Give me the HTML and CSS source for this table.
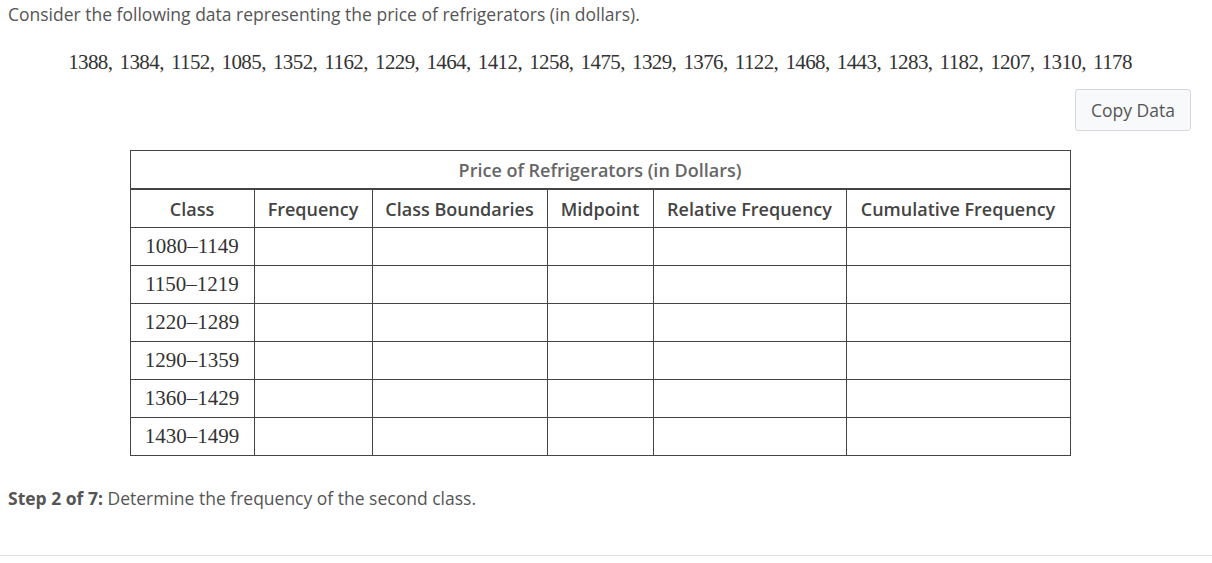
FILE: index.html
```html
<!DOCTYPE html>
<html>
<head>
<meta charset="utf-8">
<link rel="stylesheet" href="styles.css">
</head>
<body>
<div class="page">
  <p class="intro">Consider the following data representing the price of refrigerators (in dollars).</p>
  <p class="data">1388, 1384, 1152, 1085, 1352, 1162, 1229, 1464, 1412, 1258, 1475, 1329, 1376, 1122, 1468, 1443, 1283, 1182, 1207, 1310, 1178</p>
  <div class="btn-row"><button class="copy-btn">Copy Data</button></div>
  <div class="table-wrap">
    <table class="freq">
      <colgroup>
        <col class="c1"><col class="c2"><col class="c3"><col class="c4"><col class="c5"><col class="c6">
      </colgroup>
      <thead>
        <tr class="title-row"><th colspan="6">Price of Refrigerators (in Dollars)</th></tr>
        <tr class="head-row">
          <th>Class</th>
          <th>Frequency</th>
          <th>Class Boundaries</th>
          <th>Midpoint</th>
          <th>Relative Frequency</th>
          <th>Cumulative Frequency</th>
        </tr>
      </thead>
      <tbody>
        <tr><td class="cls">1080–1149</td><td></td><td></td><td></td><td></td><td></td></tr>
        <tr><td class="cls">1150–1219</td><td></td><td></td><td></td><td></td><td></td></tr>
        <tr><td class="cls">1220–1289</td><td></td><td></td><td></td><td></td><td></td></tr>
        <tr><td class="cls">1290–1359</td><td></td><td></td><td></td><td></td><td></td></tr>
        <tr><td class="cls">1360–1429</td><td></td><td></td><td></td><td></td><td></td></tr>
        <tr><td class="cls">1430–1499</td><td></td><td></td><td></td><td></td><td></td></tr>
      </tbody>
    </table>
  </div>
  <p class="step"><span class="step-label">Step 2 of 7:</span> Determine the frequency of the second class.</p>
</div>
<div class="rule"></div>
</body>
</html>
```

FILE: styles.css
```css
html, body {
  margin: 0;
  padding: 0;
  background: #fff;
}
body {
  font-family: "Open Sans", "Liberation Sans", sans-serif;
  color: #555;
  font-size: 17.5px;
}
.page {
  padding: 0 20px 0 8px;
}
.intro {
  margin: 0;
  padding-top: 2px;
  line-height: 24px;
}
.data {
  margin: 23px 0 0 0;
  font-family: "Liberation Serif", "Times New Roman", serif;
  font-size: 21px;
  letter-spacing: -0.6px;
  word-spacing: 2.5px;
  line-height: 26px;
  color: #333;
  text-align: center;
}
.btn-row {
  display: flex;
  justify-content: flex-end;
  margin-top: 14px;
}
.copy-btn {
  font-family: "Open Sans", "Liberation Sans", sans-serif;
  font-size: 17.5px;
  color: #555;
  background: #f8f9fa;
  border: 1px solid #d6d8db;
  border-radius: 3px;
  height: 42px;
  width: 116px;
  padding: 0;
  margin-right: 1px;
}
.table-wrap {
  display: flex;
  justify-content: center;
  margin-top: 19px;
}
.freq {
  border-collapse: collapse;
  width: 940px;
  table-layout: fixed;
  color: #444;
}
.freq th, .freq td {
  border: 1px solid #444;
  padding: 0;
  height: 37px;
  text-align: center;
  white-space: nowrap;
}
.freq th {
  font-weight: 600;
  font-size: 18px;
}
.title-row th {
  color: #666;
  border-bottom: 2px solid #444;
}
.head-row th {
  color: #444;
}
.c1 { width: 124px; }
.c2 { width: 118px; }
.c3 { width: 175px; }
.c4 { width: 106px; }
.c5 { width: 193px; }
.c6 { width: 224px; }
.freq td.cls {
  font-family: "Liberation Serif", "Times New Roman", serif;
  font-size: 21px;
  color: #333;
}
.step {
  margin: 30px 0 0 0;
  line-height: 24px;
}
.step-label {
  font-weight: 700;
}
.rule {
  margin-top: 45px;
  border-top: 1px solid #ddd;
}
```
